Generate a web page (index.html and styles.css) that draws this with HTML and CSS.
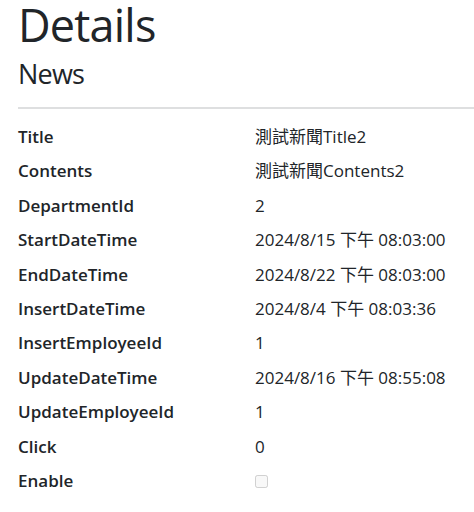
FILE: index.html
```html
<!DOCTYPE html>
<html lang="zh-Hant">
<head>
<meta charset="utf-8">
<title>Details</title>
<link rel="stylesheet" href="styles.css">
</head>
<body>
<main class="page">
  <h1 class="title">Details</h1>
  <h4 class="subtitle">News</h4>
  <hr class="rule">
  <dl class="details">
    <dt>Title</dt><dd>測試新聞Title2</dd>
    <dt>Contents</dt><dd>測試新聞Contents2</dd>
    <dt>DepartmentId</dt><dd>2</dd>
    <dt>StartDateTime</dt><dd>2024/8/15 下午 08:03:00</dd>
    <dt>EndDateTime</dt><dd>2024/8/22 下午 08:03:00</dd>
    <dt>InsertDateTime</dt><dd>2024/8/4 下午 08:03:36</dd>
    <dt>InsertEmployeeId</dt><dd>1</dd>
    <dt>UpdateDateTime</dt><dd>2024/8/16 下午 08:55:08</dd>
    <dt>UpdateEmployeeId</dt><dd>1</dd>
    <dt>Click</dt><dd>0</dd>
    <dt>Enable</dt><dd><input class="check" type="checkbox" disabled></dd>
  </dl>
</main>
</body>
</html>
```

FILE: styles.css
```css
html, body {
  margin: 0;
  padding: 0;
  background: #fff;
}
body {
  font-family: "Open Sans", "Noto Sans CJK TC", sans-serif;
  color: #212529;
  font-size: 17px;
}
.page {
  padding-left: 18px;
  padding-top: 2px;
}
.title {
  margin: 0;
  font-size: 45px;
  line-height: 45px;
  font-weight: 400;
  letter-spacing: -0.8px;
}
.subtitle {
  margin: 11px 0 0;
  font-size: 27px;
  line-height: 32px;
  font-weight: 400;
  letter-spacing: -0.8px;
}
.rule {
  margin: 17px 0 15px;
  border: 0;
  border-top: 2px solid #dedfe0;
  height: 0;
}
.details {
  margin: 0;
  display: grid;
  grid-template-columns: 237px 1fr;
  row-gap: 8.9px;
  line-height: 25.5px;
}
.details dt {
  font-weight: 600;
}
.details dd {
  margin: 0;
}
.check {
  margin: 0;
  width: 13px;
  height: 13px;
  vertical-align: -1px;
}
```
